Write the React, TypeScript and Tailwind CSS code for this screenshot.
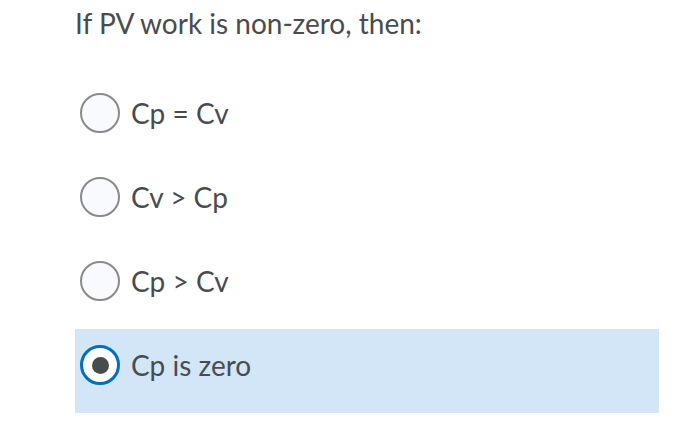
import { useState } from "react";

const options = ["Cp = Cv", "Cv > Cp", "Cp > Cv", "Cp is zero"];

function Radio({ checked }: { checked: boolean }) {
  if (checked) {
    return (
      <span className="grid h-10 w-10 shrink-0 place-items-center rounded-full border-[3px] border-[#006fbf] bg-white">
        <span className="h-[17px] w-[17px] rounded-full bg-[#494c4e]" />
      </span>
    );
  }
  return (
    <span className="h-10 w-10 shrink-0 rounded-full border-2 border-[#8a8a8a] bg-[#f9fafe]" />
  );
}

export default function App() {
  const [selected, setSelected] = useState(3);

  return (
    <div className="min-h-[427px] w-[700px] bg-white font-['Lato',sans-serif] text-[#494c4e]">
      <div className="w-[584px] pl-[75px] box-content">
        <h1 className="pt-[5px] text-[28px] leading-9 font-normal">If PV work is non-zero, then:</h1>
        <div className="mt-9 flex flex-col">
          {options.map((label, i) => (
            <label
              key={label}
              className={`flex h-[84px] cursor-pointer items-start gap-[11px] pt-4 pl-[5px] ${
                selected === i ? "bg-[#d2e6f8]" : ""
              }`}
              onClick={() => setSelected(i)}
            >
              <Radio checked={selected === i} />
              <span className="text-[28px] leading-10">{label}</span>
            </label>
          ))}
        </div>
      </div>
    </div>
  );
}
